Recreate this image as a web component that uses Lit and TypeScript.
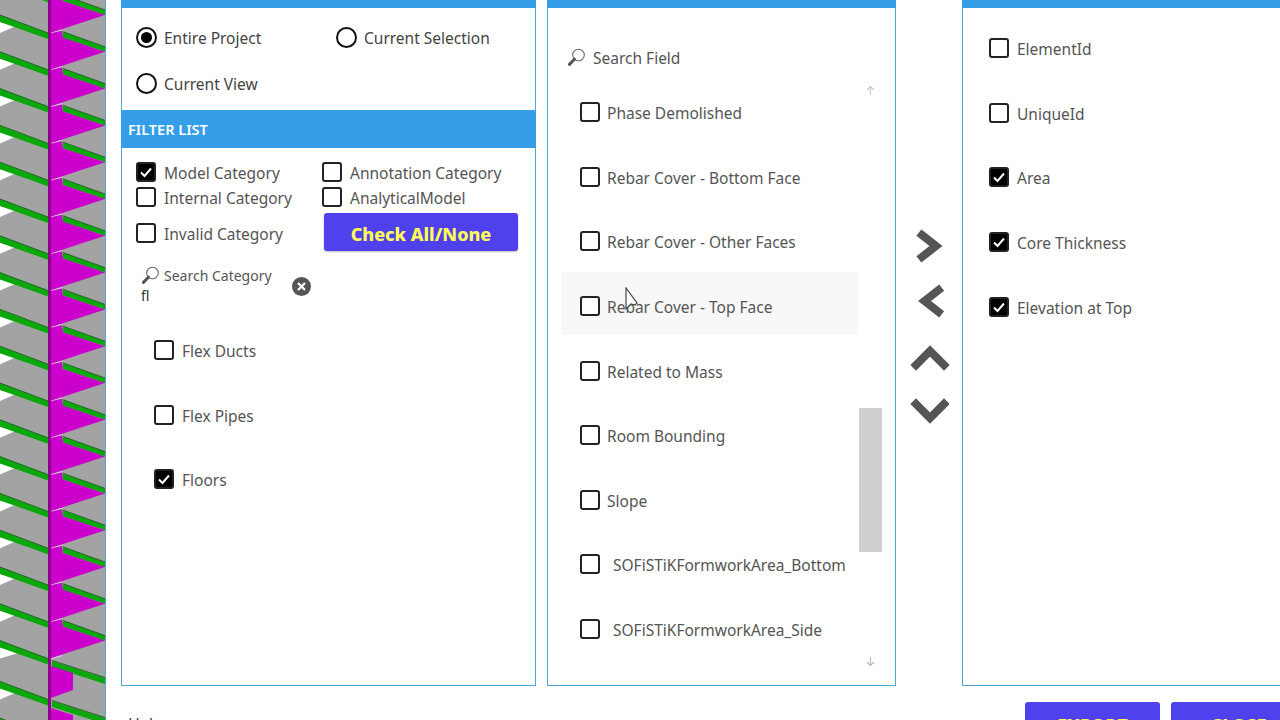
import { LitElement, html, css, svg } from "lit";
import { customElement } from "lit/decorators.js";

const search = html`<svg class="mag" width="19" height="19" viewBox="0 0 19 19"><circle cx="11.5" cy="7" r="5.8" fill="#fff" stroke="#6a6a6a" stroke-width="1.1"/><path d="M7.4 11.2 2.4 16.4" stroke="#555" stroke-width="3" stroke-linecap="round"/></svg>`;

const box = (checked: boolean) => html`<span class="box ${checked ? "on" : ""}">${checked ? html`<svg width="14" height="14" viewBox="0 0 14 14"><path d="M2 7.5 5.5 11 12 3.5" fill="none" stroke="#fff" stroke-width="2"/></svg>` : ""}</span>`;

const row = (label: string, checked = false, cls = "") => html`<div class="row ${cls}">${box(checked)}<span>${label}</span></div>`;

const radio = (label: string, on = false) => html`<div class="radio ${on ? "on" : ""}"><span class="dot"></span><span class="rlabel">${label}</span></div>`;

const fields = ["Phase Demolished", "Rebar Cover - Bottom Face", "Rebar Cover - Other Faces", "Rebar Cover - Top Face", "Related to Mass", "Room Bounding", "Slope"];

@customElement("app-root")
export class AppRoot extends LitElement {
  static styles = css`
    :host { display: flex; width: 1280px; height: 720px; overflow: hidden; background: #fff; font-family: "Noto Sans", "Open Sans", sans-serif; font-size: 15.5px; color: #555; }
    * { box-sizing: border-box; }
    .model { width: 106px; height: 720px; flex: none; display: block; }
    .main { margin-left: 15px; flex: none; width: 1200px; display: flex; flex-direction: column; }
    .panels { display: flex; height: 686px; flex: none; }
    .panel { border: 1px solid #4ea6d2; border-top: 0; display: flex; flex-direction: column; flex: none; background: #fff; }
    .band { height: 8px; background: #349fe8; flex: none; margin: 0 -1px; }
    .p1 { width: 415px; }
    .p2 { width: 349px; margin-left: 11px; }
    .p3 { width: 340px; }
    .radios { display: grid; grid-template-columns: 200px 1fr; grid-auto-rows: 46px; padding: 6px 0 0 14px; height: 102px; flex: none; }
    .radio { display: flex; align-items: center; gap: 7px; color: #444; }
    .rlabel { padding-top: 2px; }
    .dot { width: 21px; height: 21px; border-radius: 50%; border: 2px solid #111; flex: none; display: flex; align-items: center; justify-content: center; }
    .radio.on .dot::after { content: ""; width: 11px; height: 11px; border-radius: 50%; background: #000; }
    .filter { height: 38px; background: #349fe8; color: #fff; font-weight: 600; font-size: 14.5px; display: flex; align-items: center; flex: none; margin: 0 -1px; padding: 0 0 0 7px; }
    .cats { display: grid; grid-template-columns: 186px 196px; grid-template-rows: 25px 25px 38px; row-gap: 0; padding: 12px 0 0 14px; flex: none; }
    .cats .row { height: auto; padding: 0; gap: 8px; }
    .cats .third { margin-top: 9px; }
    .box { width: 20px; height: 20px; border: 2px solid #222; border-radius: 3px; flex: none; display: flex; align-items: center; justify-content: center; background: #fff; margin-top: -2px; }
    .box.on { background: #000; }
    .row { display: flex; align-items: center; gap: 8px; height: 64.6px; white-space: nowrap; }
    .check-btn { margin: 3px 0 0 2px; width: 194px; height: 38px; padding-top: 3px; background: #5041ef; color: #ffff55; font-weight: 800; font-size: 18px; border-radius: 3px; display: flex; align-items: center; justify-content: center; box-shadow: 0 1px 2px #0004; }
    .cat-search { display: flex; padding: 18px 0 0 19px; height: 71px; flex: none; }
    .cat-field { width: 151px; font-size: 14px; }
    .hint { display: flex; align-items: center; gap: 4px; color: #555; }
    .typed { color: #333; line-height: 18px; margin-top: 2px; }
    .clear { width: 19px; height: 19px; margin-top: 11px; display: block; }
    .cat-list { padding-left: 32px; }
    .field-search { height: 73px; flex: none; padding: 26px 0 0 19px; align-self: flex-start; gap: 7px; }
    .field-body { display: flex; flex: 1; padding: 0 0 18px 13px; min-height: 0; }
    .field-list { width: 297px; flex: none; }
    .field-list .row { padding-left: 19px; gap: 7px; }
    .field-list .hover { background: linear-gradient(#f8f8f8, #f8f8f8) no-repeat 0 0 / 100% 60px; box-shadow: 0 -3px 0 #f8f8f8; }
    .field-list .wide { gap: 13px; }
    .track { width: 23px; flex: none; margin-left: 1px; display: flex; flex-direction: column; align-items: center; }
    .track svg { flex: none; margin-top: 4px; }
    .thumb { width: 23px; height: 144px; background: #cfcfcf; margin-top: 312px; flex: none; }
    .track .down { margin-top: auto; }
    .moves { width: 66px; flex: none; display: flex; flex-direction: column; align-items: center; padding-top: 226px; }
    .moves svg { display: block; flex: none; }
    .moves svg:nth-child(2) { margin-top: 15px; }
    .moves svg:nth-child(3) { margin-top: 17px; }
    .moves svg:nth-child(4) { margin-top: 13px; }
    .own { padding: 9px 0 0 26px; }
    .foot { display: flex; flex: none; height: 60px; }
    .help { margin: 28px 0 0 7px; width: 897px; flex: none; line-height: 20px; font-size: 16px; color: #444; }
    .btn { width: 135px; height: 46px; margin-top: 16px; background: #5041ef; color: #ffff55; font-weight: 800; font-size: 18px; border-radius: 3px; display: flex; align-items: center; justify-content: center; flex: none; }
    .btn + .btn { margin-left: 11px; }
    .cursor { position: absolute; left: 624px; top: 287px; pointer-events: none; }
  `;

  private modelSvg() {
    const out = [];
    for (let k = -1; k <= 19; k++) {
      const full = k <= 17;
      const T = 15 + 36.8 * k + (full ? 0 : 4);
      const whiteW = k === 17 ? 23 : 16;
      out.push(svg`<polygon points="0,${T + 7} ${whiteW},${T + 11} 0,${T + 18}" fill="#fff"/>`);
      out.push(svg`<polygon points="0,${T} 48,${T + 18} 48,${T + 24} 0,${T + 7}" fill="#0aa80a"/>`);
      out.push(svg`<path d="M0 ${T} 48 ${T + 18}" stroke="#25662a" stroke-width="1"/>`);
      if (full) {
        out.push(svg`<polygon points="63,${T - 20} 105,${T - 5} 105,${T} 63,${T - 14}" fill="#0aa80a"/>`);
        out.push(svg`<path d="M63 ${T - 20} 105 ${T - 5}" stroke="#25662a" stroke-width="1"/>`);
        out.push(svg`<polygon points="48,${T - 18} 62,${T - 21} 63,${T - 14} 105,${T} 50,${T + 18} 48,${T + 18}" fill="#cc00cc"/>`);
        out.push(svg`<path d="M50 ${T + 18.5} 62 ${T + 15}" stroke="#e9c5e9" stroke-width="1"/>`);
      }
    }
    return svg`
      ${out}
      <rect x="48" y="0" width="3" height="720" fill="#8c008c"/>
      <polygon points="52,661 105,678 105,684 52,667" fill="#0aa80a"/>
      <path d="M52 660.5 105 677.5" stroke="#25662a" stroke-width="1"/>
      <polygon points="51,666 73,673 73,690 51,698" fill="#cc00cc"/>
      <polygon points="52,701 105,718 105,724 52,707" fill="#0aa80a"/>
      <path d="M52 700.5 105 717.5" stroke="#25662a" stroke-width="1"/>
      <polygon points="51,708 73,715 73,720 51,720" fill="#cc00cc"/>
      <rect x="105" y="0" width="1" height="720" fill="#5aa4d4"/>
    `;
  }

  private chevron(points: string, w: number, h: number) {
    return html`<svg width=${w} height=${h} viewBox="0 0 ${w} ${h}"><polyline points=${points} fill="none" stroke="#555" stroke-width="8" stroke-linecap="square" stroke-linejoin="miter"/></svg>`;
  }

  render() {
    return html`
      <svg class="model" viewBox="0 0 106 720"><rect width="106" height="720" fill="#a3a3a3"/>${this.modelSvg()}</svg>
      <div class="main">
        <div class="panels">
          <section class="panel p1">
            <div class="band"></div>
            <div class="radios">
              ${radio("Entire Project", true)}${radio("Current Selection")}${radio("Current View")}
            </div>
            <div class="filter">FILTER LIST</div>
            <div class="cats">
              ${row("Model Category", true)}${row("Annotation Category")}
              ${row("Internal Category")}${row("AnalyticalModel")}
              ${row("Invalid Category", false, "third")}
              <div class="check-btn">Check All/None</div>
            </div>
            <div class="cat-search">
              <div class="cat-field">
                <div class="hint">${search}<span>Search Category</span></div>
                <div class="typed">fl</div>
              </div>
              <svg class="clear" viewBox="0 0 19 19"><circle cx="9.5" cy="9.5" r="9.5" fill="#555"/><path d="M6 6l7 7M13 6l-7 7" stroke="#fff" stroke-width="2.2"/></svg>
            </div>
            <div class="cat-list">
              ${row("Flex Ducts")}${row("Flex Pipes")}${row("Floors", true)}
            </div>
          </section>
          <section class="panel p2">
            <div class="band"></div>
            <div class="hint field-search">${search}<span>Search Field</span></div>
            <div class="field-body">
              <div class="field-list">
                ${fields.map((f, i) => row(f, false, i === 3 ? "hover" : ""))}
                ${row("SOFiSTiKFormworkArea_Bottom", false, "wide")}
                ${row("SOFiSTiKFormworkArea_Side", false, "wide")}
              </div>
              <div class="track">
                <svg width="11" height="11" viewBox="0 0 11 11"><path d="M5.5 10V2M2 5l3.5-3.5L9 5" fill="none" stroke="#c8c8c8" stroke-width="1.2"/></svg>
                <div class="thumb"></div>
                <svg class="down" width="11" height="11" viewBox="0 0 11 11"><path d="M5.5 1v8M2 6l3.5 3.5L9 6" fill="none" stroke="#b8b8b8" stroke-width="1.2"/></svg>
              </div>
            </div>
          </section>
          <div class="moves">
            ${this.chevron("11,9 25,20 11,31", 36, 40)}
            ${this.chevron("29.5,9 15.5,20 29.5,31", 40, 40)}
            ${this.chevron("7,27 21,13 35,27", 40, 40)}
            ${this.chevron("7,13 21,27 35,13", 40, 40)}
          </div>
          <section class="panel p3">
            <div class="band"></div>
            <div class="own">
              ${row("ElementId")}${row("UniqueId")}${row("Area", true)}${row("Core Thickness", true)}${row("Elevation at Top", true)}
            </div>
          </section>
        </div>
        <div class="foot">
          <div class="help">Help</div>
          <div class="btn">EXPORT</div>
          <div class="btn">CLOSE</div>
        </div>
      </div>
      <svg class="cursor" width="20" height="30" viewBox="0 0 20 30"><path d="M2 1v21l5-5 4 1 2-2L2 1z" fill="#fff" stroke="#444" stroke-width="1.2"/></svg>
    `;
  }
}
